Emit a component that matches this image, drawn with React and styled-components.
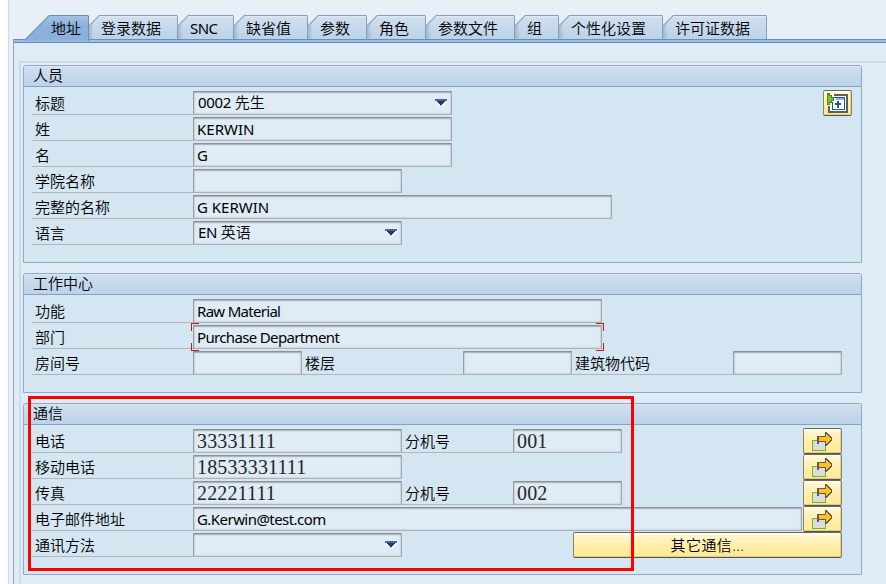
import React from 'react';
import styled, { createGlobalStyle } from 'styled-components';

const tabs = [
  { label: '地址', width: 64, active: true },
  { label: '登录数据', width: 89 },
  { label: 'SNC', width: 56, tight: 0.6, weight: 400 },
  { label: '缺省值', width: 74 },
  { label: '参数', width: 59 },
  { label: '角色', width: 59 },
  { label: '参数文件', width: 89 },
  { label: '组', width: 44 },
  { label: '个性化设置', width: 104 },
  { label: '许可证数据', width: 104 },
];

const DropArrow = () => (
  <ArrowSvg width="13" height="8" viewBox="0 0 13 8" shapeRendering="crispEdges">
    <path d="M1 2h12v1h-1v1h-1v1h-1v1h-1v1h-1v1h-4v-1h-1v-1h-1v-1h-1v-1h-1z" fill="#edf4fa" />
    <path d="M0 0h12v2h-12z" fill="#4d6690" />
    <path d="M2 2h8v1h-1v1h-1v1h-1v1h-2v-1h-1v-1h-1v-1h-1z" fill="#1d3874" />
    <path d="M5 6h1v1h-1z" fill="#8397b4" />
  </ArrowSvg>
);

const TransferIcon = () => (
  <svg width="21" height="22" viewBox="0 0 21 22" shapeRendering="crispEdges">
    <path d="M0 10h14v11h-14z" fill="#77b51c" />
    <path d="M1 11h12v9h-12z" fill="#dcdcdc" />
    <path d="M5 6h8v-4h2v1h1v1h1v1h1v1h1v1h1v4h-1v1h-1v1h-1v1h-1v1h-1v1h-2v-4h-6v2h-2z" fill="#5b5b5b" />
    <path d="M7 7h7v-3h1v1h1v1h1v1h1v1h1v2h-1v1h-1v1h-1v1h-1v1h-1v-3h-7z" fill="#ffc21a" />
  </svg>
);

const ExpandIcon = () => (
  <svg width="23" height="22" viewBox="0 0 23 22" shapeRendering="crispEdges">
    <path d="M2 2h19v19h-19z" fill="#fff" />
    <path d="M8 2h14v19h-2v-17h-12zM2 14h2v5h16v2h-18z" fill="#5e5e5e" />
    <path d="M6 5h13v13h-13v-8h1v7h11v-11h-12z" fill="#0f6294" />
    <path d="M10 6h8v2h-8z" fill="#8fb1dc" />
    <path d="M11 9h2v2h2v2h-2v3h-2v-3h-2v-2h2z" fill="#2455a0" />
    <path d="M1 1h3v2h2v2h2v4h-2v2h-2v2h-3z" fill="#4e871f" />
    <path d="M2 3h1v1h2v2h2v2h-2v2h-2v2h-1z" fill="#86bd2c" />
  </svg>
);

const Select = ({ width, code, children }) => (
  <Field $width={width} $indent={4} $lineHeight={21} $tight={0.3}>
    {code} <OptionText>{children}</OptionText>
    <DropArrow />
  </Field>
);

const Transfer = () => (
  <IconButton $width={39}>
    <TransferIcon />
  </IconButton>
);

const App = () => {
  return (
    <Screen>
      <GlobalStyle />
      <TabBar>
        {tabs.map((tab) => (
          <Tab key={tab.label} $width={tab.width} $active={tab.active} $tight={tab.tight} $weight={tab.weight}>
            <span>{tab.label}</span>
          </Tab>
        ))}
      </TabBar>
      <Panel>
        <Frame>
          <Group $height={198}>
            <GroupTitle>人员</GroupTitle>
            <Rows>
              <Row>
                <Label>标题</Label>
                <Select width={259} code="0002">先生</Select>
                <IconButton $width={29} $outdent={10}>
                  <ExpandIcon />
                </IconButton>
              </Row>
              <Row>
                <Label>姓</Label>
                <Field $width={259}>KERWIN</Field>
              </Row>
              <Row>
                <Label>名</Label>
                <Field $width={259}>G</Field>
              </Row>
              <Row>
                <Label>学院名称</Label>
                <Field $width={209} />
              </Row>
              <Row>
                <Label>完整的名称</Label>
                <Field $width={419}>G KERWIN</Field>
              </Row>
              <Row>
                <Label>语言</Label>
                <Select width={209} code="EN">英语</Select>
              </Row>
            </Rows>
          </Group>

          <Group $height={120}>
            <GroupTitle>工作中心</GroupTitle>
            <Rows>
              <Row>
                <Label>功能</Label>
                <Field $width={409} $tight={0.7}>Raw Material</Field>
              </Row>
              <Row>
                <Label>部门</Label>
                <Field $width={409} $tight={0.65}>
                  Purchase Department
                  <Corner $top $left />
                  <Corner $top />
                  <Corner $left />
                  <Corner />
                </Field>
              </Row>
              <Row>
                <Label>房间号</Label>
                <Field $width={109} />
                <Label>楼层</Label>
                <Field $width={109} />
                <Label>建筑物代码</Label>
                <Field $width={109} />
              </Row>
            </Rows>
          </Group>

          <Group $height={172}>
            <GroupTitle>通信</GroupTitle>
            <Rows>
              <Row>
                <Label>电话</Label>
                <Field $width={209} $numeric>33331111</Field>
                <Label $width={111}>分机号</Label>
                <Field $width={109} $numeric>001</Field>
                <Transfer />
              </Row>
              <Row>
                <Label>移动电话</Label>
                <Field $width={209} $numeric>18533331111</Field>
                <Transfer />
              </Row>
              <Row>
                <Label>传真</Label>
                <Field $width={209} $numeric>22221111</Field>
                <Label $width={111}>分机号</Label>
                <Field $width={109} $numeric>002</Field>
                <Transfer />
              </Row>
              <Row>
                <Label>电子邮件地址</Label>
                <Field $width={609} $tight={0.55}>G.Kerwin@test.com</Field>
                <Transfer />
              </Row>
              <Row>
                <Label>通讯方法</Label>
                <Select width={209} />
                <IconButton $width={269}>
                  <ButtonText>其它通信...</ButtonText>
                </IconButton>
              </Row>
            </Rows>
            <Highlight />
          </Group>
        </Frame>
      </Panel>
    </Screen>
  );
};

const GlobalStyle = createGlobalStyle`
  * {
    box-sizing: border-box;
  }

  body {
    margin: 0;
    overflow: hidden;
    color: #000;
    font-family: 'Noto Sans', 'Noto Sans CJK SC', sans-serif;
    font-size: 15px;
  }
`;

const Screen = styled.div`
  display: flex;
  flex-direction: column;
  width: 886px;
  height: 584px;
  padding: 15px 0 0 13px;
  overflow: hidden;
  background: linear-gradient(to right, #fff 0, #fafbfc 8px, #cfdae6 8px, #cfdae6 9px, #e8eff6 9px);
`;

const TabBar = styled.div`
  display: flex;
  height: 24px;
  flex: none;
  padding-left: 12px;
`;

const Tab = styled.div`
  --cut: ${({ $active }) => ($active ? '24px' : '10px')};
  position: relative;
  flex: none;
  width: ${({ $width }) => $width}px;
  height: ${({ $active }) => ($active ? 26 : 24)}px;
  padding-left: ${({ $active }) => ($active ? 26 : 12)}px;
  background: ${({ $active }) => ($active ? '#6790bf' : '#82a0c1')};
  clip-path: polygon(0 var(--cut), var(--cut) 0, calc(100% - 1px) 0, 100% 1px, 100% 100%, 0 100%);
  font-weight: ${({ $weight }) => $weight || 350};
  letter-spacing: ${({ $tight }) => -($tight || 0)}px;
  line-height: 26px;
  white-space: nowrap;
  z-index: ${({ $active }) => ($active ? 1 : 0)};

  &::before {
    content: '';
    position: absolute;
    inset: 1px 1px 0 0;
    background: ${({ $active }) =>
      $active
        ? 'linear-gradient(#a3c2e4, #8bb0db 40%, #8bb0db)'
        : 'linear-gradient(to right, rgba(125, 145, 170, 0.45), rgba(125, 145, 170, 0) 5px), linear-gradient(#e0ebf5 0, #cfdfee 2px, #bbd2e8)'};
    clip-path: polygon(0 calc(var(--cut) + 0.5px), calc(var(--cut) + 0.5px) 0, 100% 0, 100% 100%, 0 100%);
  }

  span {
    position: relative;
  }
`;

const Panel = styled.div`
  flex: 1;
  padding: 22px 0 0 5px;
  border-left: 1px solid #86a6c6;
  background: linear-gradient(#6790bf 0, #6790bf 1px, #9dbfe2 1px, #9dbfe2 3px, #5f89b8 3px, #5f89b8 4px, #dfebf5 4px);
`;

const Frame = styled.div`
  display: flex;
  flex-direction: column;
  gap: 10px;
  height: 100%;
  padding: 2px;
  border: 2px solid #cddce9;
  border-width: 2px 0 0 2px;
`;

const Group = styled.section`
  position: relative;
  flex: none;
  width: 839px;
  height: ${({ $height }) => $height}px;
  border: 1px solid #8daac8;
  border-radius: 3px 3px 0 0;
  background: #d5e6f3;
`;

const GroupTitle = styled.div`
  height: 21px;
  padding-left: 9px;
  border-bottom: 1px solid #84a2c3;
  border-radius: 2px 2px 0 0;
  background: linear-gradient(#e6eff8 0, #cfdfee 1px, #bcd3e9);
  font-weight: 350;
  line-height: 18px;
`;

const Rows = styled.div`
  display: flex;
  flex-direction: column;
  gap: 2px;
  width: 818px;
  padding: 4px 0 0 8px;
`;

const Row = styled.div`
  display: flex;
  height: 24px;
`;

const Label = styled.div`
  flex: none;
  width: ${({ $width }) => $width || 161}px;
  padding-left: 3px;
  border-bottom: 1px solid #b3b6b9;
  font-weight: 350;
  line-height: 24px;
`;

const Field = styled.div`
  position: relative;
  flex: none;
  width: ${({ $width }) => $width}px;
  height: 24px;
  padding-left: ${({ $indent }) => $indent || 3}px;
  border: 1px solid;
  border-color: #8d9194 #a5a8ab #b0b0b0 #999da0;
  border-radius: 1px;
  background: #dfebf5;
  box-shadow: inset 0 1px 1px rgba(90, 100, 110, 0.35), inset 0 0 2px rgba(90, 100, 110, 0.4);
  color: ${({ $numeric }) => ($numeric ? '#262626' : '#000')};
  font-family: ${({ $numeric }) =>
    $numeric ? "'Liberation Serif', serif" : "'Noto Sans', 'Noto Sans CJK SC', sans-serif"};
  font-size: ${({ $numeric }) => ($numeric ? 20 : 15)}px;
  letter-spacing: ${({ $numeric, $tight }) => ($numeric ? 0.15 : -($tight || 0))}px;
  line-height: ${({ $lineHeight }) => $lineHeight || 23}px;
  white-space: nowrap;
`;

const OptionText = styled.span`
  font-weight: 350;
  letter-spacing: 0;
`;

const ArrowSvg = styled.svg`
  position: absolute;
  top: 7px;
  right: 3px;
`;

const Corner = styled.i`
  position: absolute;
  width: 8px;
  height: 8px;
  border: 0 solid #d80f14;
  ${({ $top }) => ($top ? 'top: -3px; border-top-width: 1px;' : 'bottom: -3px; border-bottom-width: 1px;')}
  ${({ $left }) => ($left ? 'left: -3px; border-left-width: 1px;' : 'right: -3px; border-right-width: 1px;')}
`;

const IconButton = styled.button`
  display: flex;
  align-items: center;
  justify-content: center;
  flex: none;
  width: ${({ $width }) => $width}px;
  height: 26px;
  margin: -1px ${({ $outdent }) => -($outdent || 0)}px -1px auto;
  padding: 0;
  border: 1px solid;
  border-color: #6b6759 #8a8467 #55545a #8a8467;
  border-radius: 2px;
  background: linear-gradient(#fffdf0 0, #fff5cd 3px, #ffeeab 50%, #ffe996);
  box-shadow: inset -1px -1px 0 rgba(170, 150, 90, 0.35);
  color: #000;
  font: inherit;
`;

const ButtonText = styled.span`
  padding-bottom: 2px;
  font-weight: 350;
  letter-spacing: 0.4px;
`;

/* red marker drawn over the communication group */
const Highlight = styled.div`
  position: absolute;
  top: -8px;
  left: 4px;
  width: 606px;
  height: 175px;
  border: 3px solid #ff0000;
`;

export default App;
